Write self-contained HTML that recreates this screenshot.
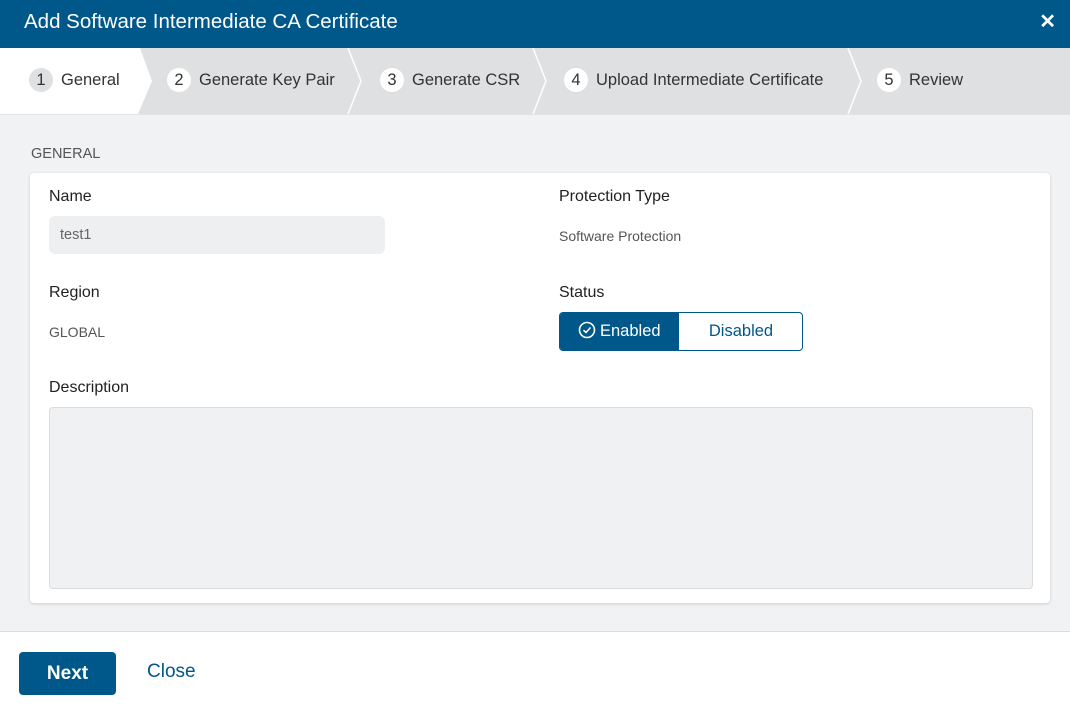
<!DOCTYPE html>
<html><head><style>
*{box-sizing:border-box;margin:0;padding:0}
body{width:1070px;height:714px;overflow:hidden;font-family:"Liberation Sans",Arial,sans-serif;background:#fff;position:relative;color:#222}
.hdr{position:absolute;left:0;top:0;width:1070px;height:48px;background:#00578a;color:#fff;font-size:20.5px;line-height:44px;padding-left:24px}
.x{position:absolute;right:14px;top:0;font-size:20px;font-weight:bold}
.tabs{position:absolute;left:0;top:48px;width:1070px;height:66px;background:#dfe0e2}
.t{position:absolute;top:20px;font-size:16.5px;color:#333;line-height:24px}
.c{display:inline-block;width:24px;height:24px;border-radius:12px;background:#fff;text-align:center;margin-right:8px}
.body{position:absolute;left:0;top:114px;width:1070px;height:518px;background:#f1f2f3;border-top:1px solid #e2e3e5;border-bottom:1px solid #dcdcdc}
.sec{position:absolute;left:31px;top:31px;font-size:14.5px;color:#555}
.card{position:absolute;left:30px;top:58px;width:1020px;height:430px;background:#fff;border-radius:4px;box-shadow:0 1px 3px rgba(0,0,0,.15)}
.l{position:absolute;font-size:16px;color:#222}
.v{position:absolute;font-size:14px;color:#555}
.inp{position:absolute;left:19px;top:43px;width:336px;height:38px;background:#eeeff0;border-radius:6px;font-size:14.5px;color:#666;padding:11px 11px}
.tog{position:absolute;left:529px;top:139px;width:244px;height:39px;border:1px solid #00578a;border-radius:4px;overflow:hidden;font-size:16.5px}
.on{position:absolute;left:0;top:0;width:119px;height:37px;background:#00578a;color:#fff;line-height:36px;padding-left:18px}
.off{position:absolute;left:119px;top:0;width:124px;height:37px;color:#00578a;line-height:36px;text-align:center}
.ta{position:absolute;left:19px;top:234px;width:984px;height:182px;background:#f0f1f2;border:1px solid #dcdcdc;border-radius:4px}
.next{position:absolute;left:19px;top:652px;width:97px;height:43px;background:#00578a;color:#fff;border-radius:4px;font-size:19px;font-weight:bold;text-align:center;line-height:43px}
.close{position:absolute;left:147px;top:661px;font-size:19px;color:#00578a}
</style></head><body>
<div class="hdr">Add Software Intermediate CA Certificate<span class="x">✕</span></div>
<div class="tabs">
<svg width="1070" height="66" style="position:absolute;left:0;top:0">
<polygon points="0,0 140,0 152,33 138,66 0,66" fill="#fff"/>
<polyline points="348,0 361,33 348,66" fill="none" stroke="#fff" stroke-width="1.5"/>
<polyline points="533,0 546,33 533,66" fill="none" stroke="#fff" stroke-width="1.5"/>
<polyline points="848,0 861,33 848,66" fill="none" stroke="#fff" stroke-width="1.5"/>
</svg>
<div class="t" style="left:29px"><span class="c" style="background:#dfe0e2">1</span>General</div>
<div class="t" style="left:167px"><span class="c">2</span>Generate Key Pair</div>
<div class="t" style="left:380px"><span class="c">3</span>Generate CSR</div>
<div class="t" style="left:564px"><span class="c">4</span>Upload Intermediate Certificate</div>
<div class="t" style="left:877px"><span class="c">5</span>Review</div>
</div>
<div class="body">
<div class="sec">GENERAL</div>
<div class="card">
<div class="l" style="left:19px;top:15px">Name</div>
<div class="inp">test1</div>
<div class="l" style="left:529px;top:15px">Protection Type</div>
<div class="v" style="left:529px;top:55px">Software Protection</div>
<div class="l" style="left:19px;top:111px">Region</div>
<div class="v" style="left:19px;top:151px">GLOBAL</div>
<div class="l" style="left:529px;top:111px">Status</div>
<div class="tog"><div class="on"><svg width="18" height="18" viewBox="0 0 18 18" style="vertical-align:-3px;margin-right:4px"><circle cx="9" cy="9" r="7.5" fill="none" stroke="#fff" stroke-width="1.6"/><polyline points="5.5,9.2 8,11.5 12.5,6.5" fill="none" stroke="#fff" stroke-width="1.6"/></svg>Enabled</div><div class="off">Disabled</div></div>
<div class="l" style="left:19px;top:206px">Description</div>
<div class="ta"></div>
</div>
</div>
<div class="next">Next</div>
<div class="close">Close</div>
</body></html>
